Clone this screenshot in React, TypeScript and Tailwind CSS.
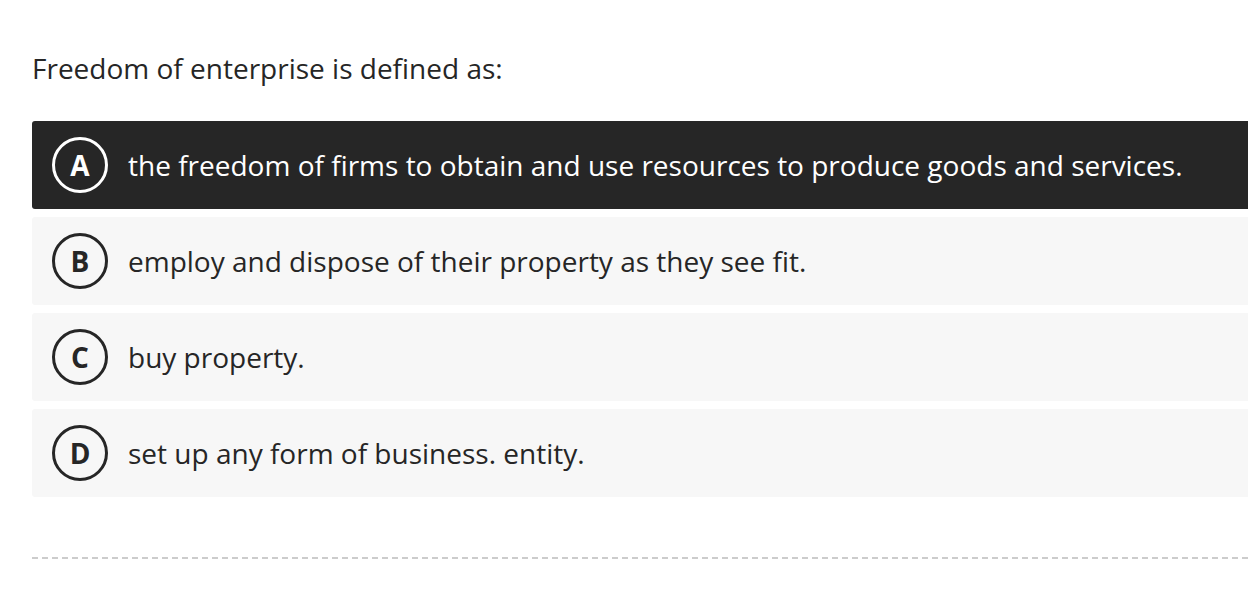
const options = [
  { key: "A", text: "the freedom of firms to obtain and use resources to produce goods and services.", selected: true },
  { key: "B", text: "employ and dispose of their property as they see fit." },
  { key: "C", text: "buy property." },
  { key: "D", text: "set up any form of business. entity." },
]

export default function App() {
  return (
    <div className="min-h-[616px] bg-white pl-8 pt-[50px] font-['Open_Sans',sans-serif] text-[#262626] overflow-hidden">
      <div className="h-9 text-[28px] leading-9 mb-[35px]">Freedom of enterprise is defined as:</div>

      <div className="flex flex-col gap-2 w-[1230px]">
        {options.map((o) => (
          <div
            key={o.key}
            className={
              o.selected
                ? "flex h-[88px] items-center gap-5 rounded-[3px] bg-[#262626] pl-5 text-white"
                : "flex h-[88px] items-center gap-5 rounded-[3px] bg-[#f7f7f7] pl-5 text-[#262626]"
            }
          >
            <div
              className={
                o.selected
                  ? "flex h-14 w-14 shrink-0 items-center justify-center rounded-full border-[3px] border-white text-[28px] font-bold"
                  : "flex h-14 w-14 shrink-0 items-center justify-center rounded-full border-[3px] border-[#262626] text-[28px] font-bold"
              }
            >
              {o.key}
            </div>
            <span className="text-[28px] leading-9">{o.text}</span>
          </div>
        ))}
      </div>

      <div className="mt-[60px] border-t-2 border-dashed border-[#cccccc]" />
    </div>
  )
}
